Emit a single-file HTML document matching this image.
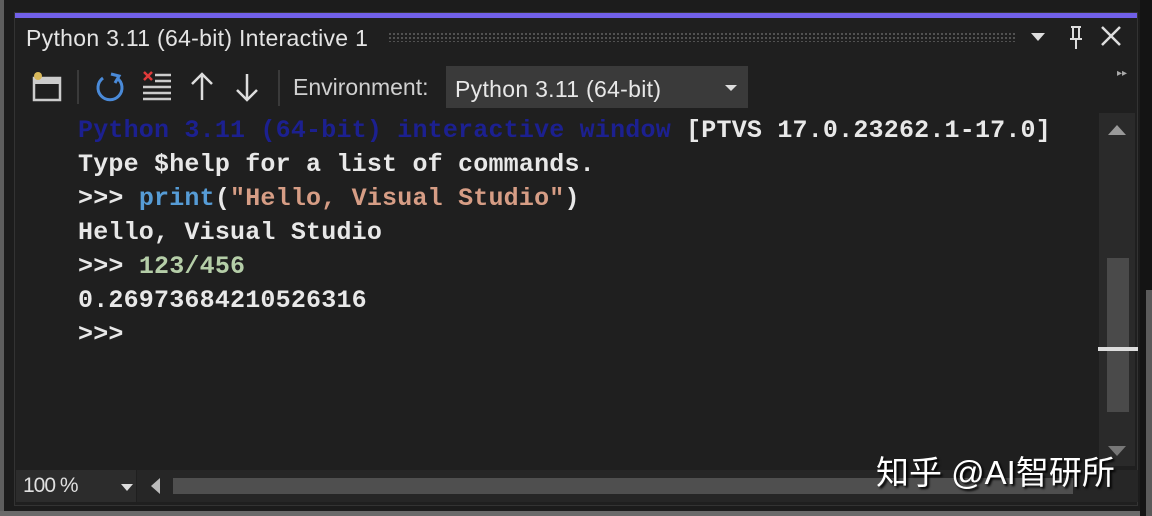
<!DOCTYPE html>
<html><head><style>
*{margin:0;padding:0;box-sizing:border-box}
body{width:1152px;height:516px;background:#1c1c1c;position:relative;overflow:hidden;font-family:"Liberation Sans",sans-serif}
.a{position:absolute}
.code{font-family:"Liberation Mono",monospace;font-weight:bold;font-size:25px;letter-spacing:0.2px;line-height:34px;white-space:pre;color:#e8e8e8}
</style></head><body>
<div class="a" style="left:0;top:0;width:4px;height:516px;background:#5e5e5e"></div>
<div class="a" style="left:0;top:511px;width:1152px;height:5px;background:#6a6a6a"></div>
<div class="a" style="left:14px;top:12px;width:1124px;height:494px;background:#1f1f1f;border:1px solid #333"></div>
<div class="a" style="left:15px;top:13px;width:1122px;height:5px;background:#7160e8"></div>
<div class="a" style="left:1140px;top:0;width:12px;height:516px;background:#141414"></div>
<div class="a" style="left:1146px;top:290px;width:6px;height:226px;background:#5a5a5a"></div>
<div class="a" style="left:26px;top:25px;font-size:23px;color:#e4e4e4;letter-spacing:0.3px">Python 3.11 (64-bit) Interactive 1</div>
<div class="a" style="left:388px;top:32px;width:628px;height:10px;background-image:radial-gradient(#555 1px,transparent 1.2px);background-size:4px 4px"></div>
<div class="a" style="left:1031px;top:33px;width:0;height:0;border-left:7px solid transparent;border-right:7px solid transparent;border-top:8px solid #ddd"></div>
<svg class="a" style="left:1066px;top:24px" width="20" height="28"><path d="M5 3h10M7 3v12M13 3v12M4 15h12M10 15v10" stroke="#ddd" stroke-width="2" fill="none"/></svg>
<svg class="a" style="left:1100px;top:25px" width="22" height="22"><path d="M2 2L20 20M20 2L2 20" stroke="#ddd" stroke-width="2.5"/></svg>
<svg class="a" style="left:30px;top:70px" width="34" height="34"><rect x="4" y="8" width="26" height="22" fill="none" stroke="#ccc" stroke-width="2.5"/><rect x="4" y="8" width="26" height="6" fill="#ccc"/><circle cx="8" cy="6" r="4" fill="#d8b85a"/></svg>
<div class="a" style="left:77px;top:70px;width:2px;height:34px;background:#3a3a3a"></div>
<svg class="a" style="left:93px;top:70px" width="36" height="34"><path d="M24 8A12 12 0 1 1 10 8" stroke="#4a8ad8" stroke-width="3" fill="none"/><path d="M18 4L26 6L22 13" stroke="#4a8ad8" stroke-width="3" fill="none"/></svg>
<svg class="a" style="left:141px;top:70px" width="32" height="32"><path d="M3 2L11 10M11 2L3 10" stroke="#e03a3a" stroke-width="2.5"/><path d="M14 5h16M14 11h16M2 17h28M2 23h28M2 29h28" stroke="#ccc" stroke-width="2.5"/></svg>
<svg class="a" style="left:188px;top:72px" width="28" height="30"><path d="M14 2V28M4 12L14 2L24 12" stroke="#ddd" stroke-width="2.5" fill="none"/></svg>
<svg class="a" style="left:233px;top:72px" width="28" height="30"><path d="M14 2V28M4 18L14 28L24 18" stroke="#ddd" stroke-width="2.5" fill="none"/></svg>
<div class="a" style="left:278px;top:70px;width:2px;height:36px;background:#3a3a3a"></div>
<div class="a" style="left:293px;top:74px;font-size:23px;color:#d0d0d0">Environment:</div>
<div class="a" style="left:446px;top:66px;width:302px;height:42px;background:#3a3a3a"></div>
<div class="a" style="left:455px;top:76px;font-size:23px;color:#e8e8e8;letter-spacing:0.3px">Python 3.11 (64-bit)</div>
<div class="a" style="left:725px;top:85px;border-left:6px solid transparent;border-right:6px solid transparent;border-top:6px solid #ddd"></div>
<div class="a" style="left:1117px;top:68px;font-size:10px;color:#aaa">▸▸</div>
<div class="a code" style="left:78px;top:114px"><span style="color:#1c2090">Python 3.11 (64-bit) interactive window</span> [PTVS 17.0.23262.1-17.0]
Type $help for a list of commands.
&gt;&gt;&gt; <span style="color:#569cd6">print</span>(<span style="color:#d69d85">"Hello, Visual Studio"</span>)
Hello, Visual Studio
&gt;&gt;&gt; <span style="color:#b5cea8">123/456</span>
0.26973684210526316
&gt;&gt;&gt;</div>
<div class="a" style="left:1099px;top:113px;width:36px;height:353px;background:#2a2a2a"></div>
<div class="a" style="left:1108px;top:125px;border-left:9px solid transparent;border-right:9px solid transparent;border-bottom:10px solid #999"></div>
<div class="a" style="left:1107px;top:258px;width:22px;height:154px;background:#4a4a4a"></div>
<div class="a" style="left:1098px;top:347px;width:40px;height:4px;background:#ddd"></div>
<div class="a" style="left:1108px;top:446px;border-left:9px solid transparent;border-right:9px solid transparent;border-top:10px solid #777"></div>
<div class="a" style="left:16px;top:470px;width:120px;height:32px;background:#2c2c2c"></div>
<div class="a" style="left:23px;top:474px;font-size:21px;color:#e0e0e0;letter-spacing:-1px">100 %</div>
<div class="a" style="left:121px;top:484px;border-left:6px solid transparent;border-right:6px solid transparent;border-top:7px solid #ddd"></div>
<div class="a" style="left:137px;top:470px;width:1001px;height:32px;background:#262626"></div>
<div class="a" style="left:151px;top:478px;border-top:8px solid transparent;border-bottom:8px solid transparent;border-right:9px solid #bbb"></div>
<div class="a" style="left:173px;top:478px;width:900px;height:16px;background:#4f4f4f"></div>
<div class="a" style="left:876px;top:446px;font-family:'Liberation Sans','Noto Sans CJK SC',sans-serif;font-size:33px;color:#fff;text-shadow:2px 2px 2px #000">知乎 @AI智研所</div>
</body></html>
